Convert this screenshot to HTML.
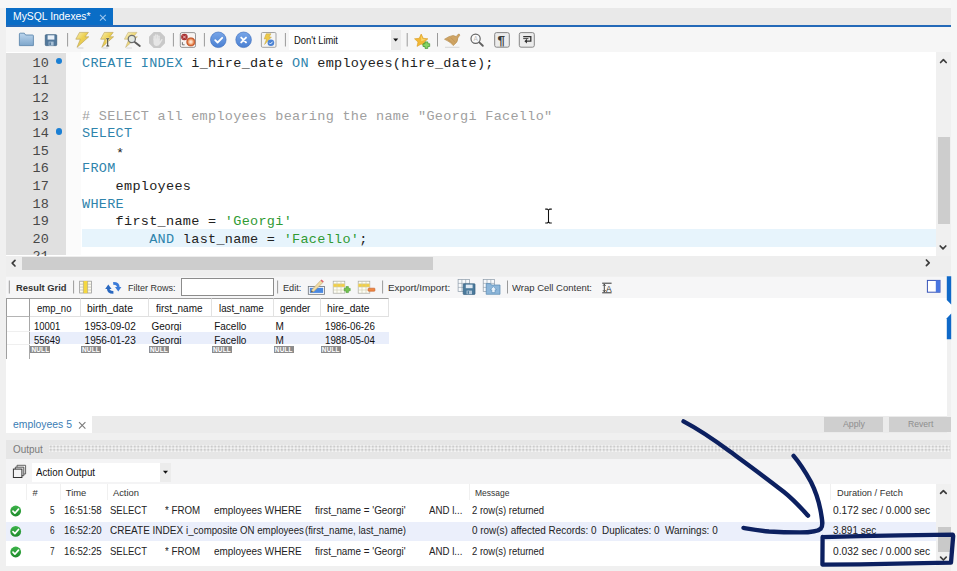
<!DOCTYPE html>
<html>
<head>
<meta charset="utf-8">
<title>MySQL Indexes</title>
<style>
*{box-sizing:border-box;margin:0;padding:0}
html,body{width:957px;height:571px;overflow:hidden;background:#f0f0f0}
body{position:relative;font-family:"Liberation Sans",sans-serif;font-size:11px;color:#111}
.abs{position:absolute}
#topstrip{left:0;top:0;width:957px;height:8px;background:#f7f7f7}
#rightstrip{left:951px;top:0;width:6px;height:571px;background:#f6f6f6}
#tabbar{left:6px;top:8px;width:945px;height:18px;background:#e9e9e9}
#tab{left:6px;top:8px;width:107px;height:19px;background:#0a6dc6}
#tabline{left:6px;top:24.9px;width:945px;height:2.7px;background:#2469b8}
#toolbar{left:6px;top:27.3px;width:945px;height:25px;background:#f6f6f6}
#editor{left:6px;top:52px;width:930px;height:203.7px;background:#fff;overflow:hidden}
#gutter{left:0;top:1px;width:59.5px;height:202px;background:#e0e0e0}
#fold{left:59.5px;top:0;width:15.5px;height:203px;background:#fbfbfb}
.ln{position:absolute;left:0;width:43.2px;text-align:right;font-family:"Liberation Mono",monospace;font-size:13.5px;letter-spacing:0.3px;color:#484848;line-height:17.6px;height:17.6px}
.dot{position:absolute;left:49.5px;width:6.4px;height:6.4px;border-radius:50%;background:#1a7fd4}
.code{position:absolute;left:76px;font-family:"Liberation Mono",monospace;font-size:13.5px;letter-spacing:0.3px;line-height:17.6px;height:17.6px;white-space:pre;color:#222}
.kw{color:#2f84ac}
.cm{color:#a0a0a0}
.st{color:#2f9a33}
#hl{left:76px;top:177.3px;width:854px;height:17.4px;background:#e7f4fc}
#vscroll{left:936px;top:52px;width:15px;height:203.7px;background:#f0f0f0}
#vthumb{left:937.5px;top:137px;width:12.5px;height:86.5px;background:#cdcdcd}
#hscroll{left:6px;top:255.7px;width:945px;height:20.8px;background:#eeeeee}
#hthumb{left:22px;top:257px;width:411px;height:12.5px;background:#cdcdcd}
.t{position:absolute;white-space:pre;line-height:1;transform-origin:0 50%}
#dd1{left:288.5px;top:30px;width:102.5px;height:19.5px;background:#fff}
#dd1b{left:391px;top:30px;width:9.5px;height:19.5px;background:#e9e9e9}
#svgall{left:0;top:0;width:957px;height:571px;pointer-events:none}
#rtool{left:6px;top:276.5px;width:941px;height:21.5px;background:#f6f6f7}
#grid{left:6px;top:297.5px;width:941px;height:118.5px;background:#fff}
#rtab{left:6px;top:416px;width:86px;height:17px;background:#fff}
#rtabbar{left:92px;top:416px;width:855px;height:17px;background:#ebebeb}
#finput{left:181px;top:277.5px;width:93px;height:18.5px;background:#fff;border:1px solid #8c8c8c}
.btn{position:absolute;top:417px;height:15.3px;background:#cfcfcf}
#outhdr{left:6px;top:439.5px;width:945px;height:19px;background:#e6e6e6}
#outdots{left:49px;top:445.4px;width:901px;height:6.4px;background-image:radial-gradient(circle,#cbcbcb 0.75px,transparent 1px),radial-gradient(circle,#f4f4f4 0.75px,transparent 1px);background-size:3.5px 3.2px;background-position:0 0,1.75px 1.6px}
#actrow{left:6px;top:458.5px;width:945px;height:26px;background:#f4f4f5}
#dd2{left:32.2px;top:463px;width:127.8px;height:18.6px;background:#fff}
#dd2b{left:160px;top:463px;width:10.5px;height:18.6px;background:#ececec}
#otable{left:6px;top:484px;width:930px;height:82px;background:#fff}
#orow2{left:6px;top:522px;width:930px;height:18.5px;background:#ebeffb}
#oscroll{left:936px;top:484px;width:15px;height:82px;background:#f0f0f0}
#othumb{left:938px;top:527px;width:12.5px;height:25px;background:#c9c9c9}
.gh{position:absolute;top:298px;height:18.5px;border-top:1px solid #9c9c9c;border-bottom:1px solid #e0e0e0;border-right:1px solid #e2e2e2;background:#fff}
.clip{position:absolute;overflow:hidden}
.null{position:absolute;top:345.6px;height:7.6px;width:20.3px;background:#8c8c8c;color:#fff;font-size:6.4px;font-weight:bold;line-height:7.6px;text-align:center;letter-spacing:0.2px}
</style>
</head>
<body>
<div class="abs" id="topstrip"></div>
<div class="abs" id="tabbar"></div>
<div class="abs" id="tab"></div>
<div class="abs" id="tabline"></div>
<div class="abs" id="toolbar"></div>
<div class="t" style="left:12.60px;top:11.37px;font-size:11.5px;color:#fff;transform:scaleX(0.9037);">MySQL Indexes*</div>
<div class="abs" id="editor">
  <div class="abs" id="gutter"></div>
  <div class="abs" id="fold"></div>
  <div class="abs" id="hl"></div>
  <div class="ln" style="top:2.7px">10</div><div class="dot" style="top:5.9px"></div>
  <div class="ln" style="top:20.3px">11</div>
  <div class="ln" style="top:37.9px">12</div>
  <div class="ln" style="top:55.5px">13</div>
  <div class="ln" style="top:73.1px">14</div><div class="dot" style="top:76.3px"></div>
  <div class="ln" style="top:90.7px">15</div>
  <div class="ln" style="top:108.3px">16</div>
  <div class="ln" style="top:125.9px">17</div>
  <div class="ln" style="top:143.5px">18</div>
  <div class="ln" style="top:161.1px">19</div>
  <div class="ln" style="top:178.7px">20</div>
  <div class="ln" style="top:196.3px">21</div>
  <div class="code" style="top:2.7px"><span class="kw">CREATE INDEX</span> i_hire_date <span class="kw">ON</span> employees(hire_date);</div>
  <div class="code" style="top:55.5px"><span class="cm"># SELECT all employees bearing the name "Georgi Facello"</span></div>
  <div class="code" style="top:73.1px"><span class="kw">SELECT</span></div>
  <div class="code" style="top:90.7px">    <span style="position:relative;top:2.2px;left:0.5px">*</span></div>
  <div class="code" style="top:108.3px"><span class="kw">FROM</span></div>
  <div class="code" style="top:125.9px">    employees</div>
  <div class="code" style="top:143.5px"><span class="kw">WHERE</span></div>
  <div class="code" style="top:161.1px">    first_name = <span class="st">'Georgi'</span></div>
  <div class="code" style="top:178.7px">        <span class="kw">AND</span> last_name = <span class="st">'Facello'</span>;</div>
</div>
<div class="abs" id="vscroll"></div>
<div class="abs" id="vthumb"></div>
<div class="abs" id="hscroll"></div>
<div class="abs" id="hthumb"></div>
<div class="abs" id="dd1"></div><div class="abs" id="dd1b"></div>
<div class="t" style="left:293.70px;top:35.23px;font-size:11.3px;color:#111;transform:scaleX(0.8295);">Don't Limit</div>
<div class="abs" id="rtool"></div>
<div class="abs" id="grid"></div>
<div class="abs" id="finput"></div>
<div class="t" style="left:16.40px;top:283.00px;font-size:9.8px;color:#333;font-weight:bold;transform:scaleX(0.9563);">Result Grid</div>
<div class="t" style="left:128.40px;top:283.00px;font-size:9.8px;color:#333;transform:scaleX(0.9199);">Filter Rows:</div>
<div class="t" style="left:282.60px;top:283.00px;font-size:9.8px;color:#333;transform:scaleX(0.9373);">Edit:</div>
<div class="t" style="left:388.00px;top:283.00px;font-size:9.8px;color:#333;transform:scaleX(1.0104);">Export/Import:</div>
<div class="t" style="left:512.00px;top:283.00px;font-size:9.8px;color:#333;transform:scaleX(0.9682);">Wrap Cell Content:</div>
<div class="gh" style="left:6.2px;width:24.1px;border-left:1px solid #9a9a9a;border-right:1px solid #9c9c9c;border-bottom:1px solid #b4b4b4"></div>
<div class="gh" style="left:30px;width:50.5px"></div>
<div class="gh" style="left:80.5px;width:68px"></div>
<div class="gh" style="left:148.5px;width:63px"></div>
<div class="gh" style="left:211.5px;width:62px"></div>
<div class="gh" style="left:273.5px;width:47px"></div>
<div class="gh" style="left:320.5px;width:68.5px"></div>
<div class="t" style="left:36.50px;top:302.81px;font-size:10.5px;color:#111;transform:scaleX(0.9083);">emp_no</div>
<div class="t" style="left:87.40px;top:302.81px;font-size:10.5px;color:#111;transform:scaleX(0.9821);">birth_date</div>
<div class="t" style="left:155.50px;top:302.81px;font-size:10.5px;color:#111;transform:scaleX(0.9479);">first_name</div>
<div class="t" style="left:218.70px;top:302.81px;font-size:10.5px;color:#111;transform:scaleX(0.9241);">last_name</div>
<div class="t" style="left:279.70px;top:302.81px;font-size:10.5px;color:#111;transform:scaleX(0.9277);">gender</div>
<div class="t" style="left:327.00px;top:302.81px;font-size:10.5px;color:#111;transform:scaleX(0.9699);">hire_date</div>
<div class="abs" style="left:6.2px;top:316.5px;width:1px;height:42.5px;background:#a0a0a0"></div>
<div class="abs" style="left:29.3px;top:316.5px;width:1px;height:42.5px;background:#a8a8a8"></div>
<div class="abs" style="left:7px;top:330.7px;width:23px;height:1px;background:#efefef"></div>
<div class="abs" style="left:7px;top:343.9px;width:23px;height:1px;background:#efefef"></div>
<div class="clip" style="left:30px;top:317px;width:359px;height:13.6px;background:transparent">
<div class="t" style="left:3.90px;top:4.54px;font-size:10px;color:#111;transform:scaleX(0.9446);">10001</div>
<div class="t" style="left:54.60px;top:4.54px;font-size:10px;color:#111;">1953-09-02</div>
<div class="t" style="left:121.50px;top:4.54px;font-size:10px;color:#111;">Georgi</div>
<div class="t" style="left:184.20px;top:4.54px;font-size:10px;color:#111;">Facello</div>
<div class="t" style="left:245.60px;top:4.54px;font-size:10px;color:#111;">M</div>
<div class="t" style="left:295.00px;top:4.54px;font-size:10px;color:#111;transform:scaleX(0.9768);">1986-06-26</div>
</div>
<div class="clip" style="left:30px;top:331.6px;width:359px;height:12.3px;background:#e9eefb">
<div class="t" style="left:3.90px;top:4.54px;font-size:10px;color:#111;transform:scaleX(0.9446);">55649</div>
<div class="t" style="left:54.60px;top:4.54px;font-size:10px;color:#111;">1956-01-23</div>
<div class="t" style="left:121.50px;top:4.54px;font-size:10px;color:#111;">Georgi</div>
<div class="t" style="left:184.20px;top:4.54px;font-size:10px;color:#111;">Facello</div>
<div class="t" style="left:245.60px;top:4.54px;font-size:10px;color:#111;">M</div>
<div class="t" style="left:295.00px;top:4.54px;font-size:10px;color:#111;transform:scaleX(0.9768);">1988-05-04</div>
</div>
<div class="null" style="left:30.2px">NULL</div>
<div class="null" style="left:80.8px">NULL</div>
<div class="null" style="left:148.8px">NULL</div>
<div class="null" style="left:211.8px">NULL</div>
<div class="null" style="left:273.6px">NULL</div>
<div class="null" style="left:320.6px">NULL</div>
<div class="abs" id="rtab"></div>
<div class="abs" id="rtabbar"></div>
<div class="t" style="left:13.00px;top:418.63px;font-size:11.3px;color:#3a7cb4;transform:scaleX(0.9203);">employees 5</div>
<div class="btn" style="left:824.1px;width:59.3px"></div>
<div class="btn" style="left:889.1px;width:61.5px"></div>
<div class="t" style="left:842.60px;top:419.93px;font-size:9.3px;color:#8e8e8e;transform:scaleX(0.9414);">Apply</div>
<div class="t" style="left:907.50px;top:419.93px;font-size:9.3px;color:#8e8e8e;transform:scaleX(0.9267);">Revert</div>
<div class="abs" id="outhdr"></div>
<div class="abs" id="outdots"></div>
<div class="t" style="left:13.00px;top:444.03px;font-size:10.6px;color:#7a7a7a;transform:scaleX(0.9359);">Output</div>
<div class="abs" id="actrow"></div>
<div class="abs" id="dd2"></div><div class="abs" id="dd2b"></div>
<div class="t" style="left:36.00px;top:466.92px;font-size:11.2px;color:#111;transform:scaleX(0.8706);">Action Output</div>
<div class="abs" id="otable"></div>
<div class="abs" id="orow2"></div>
<div class="abs" id="oscroll"></div>
<div class="abs" id="othumb"></div>
<div class="abs" style="left:26px;top:484px;width:1px;height:16px;background:#f0f0f0"></div>
<div class="abs" style="left:59.5px;top:484px;width:1px;height:16px;background:#f0f0f0"></div>
<div class="abs" style="left:106.5px;top:484px;width:1px;height:16px;background:#f0f0f0"></div>
<div class="abs" style="left:468.5px;top:484px;width:1px;height:16px;background:#f0f0f0"></div>
<div class="abs" style="left:830px;top:484px;width:1px;height:16px;background:#f0f0f0"></div>
<div class="t" style="left:32.40px;top:488.34px;font-size:9.4px;color:#333;">#</div>
<div class="t" style="left:65.80px;top:488.34px;font-size:9.4px;color:#333;">Time</div>
<div class="t" style="left:112.90px;top:488.34px;font-size:9.4px;color:#333;">Action</div>
<div class="t" style="left:475.20px;top:488.34px;font-size:9.4px;color:#333;transform:scaleX(0.9037);">Message</div>
<div class="t" style="left:836.80px;top:488.34px;font-size:9.4px;color:#333;transform:scaleX(0.9880);">Duration / Fetch</div>
<div class="t" style="left:50.20px;top:503.88px;font-size:11.6px;color:#222;transform:scaleX(0.7081);">5</div>
<div class="t" style="left:63.70px;top:503.88px;font-size:11.6px;color:#222;transform:scaleX(0.8342);">16:51:58</div>
<div class="t" style="left:110.30px;top:503.88px;font-size:11.6px;color:#222;transform:scaleX(0.8201);">SELECT</div>
<div class="t" style="left:165.30px;top:503.88px;font-size:11.6px;color:#222;transform:scaleX(0.8387);">* FROM</div>
<div class="t" style="left:213.60px;top:503.88px;font-size:11.6px;color:#222;transform:scaleX(0.8563);">employees WHERE</div>
<div class="t" style="left:314.50px;top:503.88px;font-size:11.6px;color:#222;transform:scaleX(0.8508);">first_name = 'Georgi'</div>
<div class="t" style="left:429.30px;top:503.88px;font-size:11.6px;color:#222;transform:scaleX(0.8353);">AND l...</div>
<div class="t" style="left:472.00px;top:503.88px;font-size:11.6px;color:#222;transform:scaleX(0.8171);">2 row(s) returned</div>
<div class="t" style="left:833.30px;top:503.88px;font-size:11.6px;color:#222;transform:scaleX(0.8815);">0.172 sec / 0.000 sec</div>
<div class="t" style="left:50.20px;top:524.08px;font-size:11.6px;color:#222;transform:scaleX(0.7081);">6</div>
<div class="t" style="left:63.70px;top:524.08px;font-size:11.6px;color:#222;transform:scaleX(0.8342);">16:52:20</div>
<div class="t" style="left:109.70px;top:524.08px;font-size:11.6px;color:#222;transform:scaleX(0.8622);">CREATE INDEX</div>
<div class="t" style="left:186.00px;top:524.08px;font-size:11.6px;color:#222;transform:scaleX(0.8313);">i_composite ON employees</div>
<div class="t" style="left:304.80px;top:524.08px;font-size:11.6px;color:#222;transform:scaleX(0.8292);">(first_name, last_name)</div>
<div class="t" style="left:472.00px;top:524.08px;font-size:11.6px;color:#222;transform:scaleX(0.8567);">0 row(s) affected Records: 0  Duplicates: 0  Warnings: 0</div>
<div class="t" style="left:833.30px;top:524.08px;font-size:11.6px;color:#222;transform:scaleX(0.8589);">3.891 sec</div>
<div class="t" style="left:50.20px;top:544.98px;font-size:11.6px;color:#222;transform:scaleX(0.7081);">7</div>
<div class="t" style="left:63.70px;top:544.98px;font-size:11.6px;color:#222;transform:scaleX(0.8342);">16:52:25</div>
<div class="t" style="left:110.30px;top:544.98px;font-size:11.6px;color:#222;transform:scaleX(0.8201);">SELECT</div>
<div class="t" style="left:165.30px;top:544.98px;font-size:11.6px;color:#222;transform:scaleX(0.8387);">* FROM</div>
<div class="t" style="left:213.60px;top:544.98px;font-size:11.6px;color:#222;transform:scaleX(0.8563);">employees WHERE</div>
<div class="t" style="left:314.50px;top:544.98px;font-size:11.6px;color:#222;transform:scaleX(0.8508);">first_name = 'Georgi'</div>
<div class="t" style="left:429.30px;top:544.98px;font-size:11.6px;color:#222;transform:scaleX(0.8353);">AND l...</div>
<div class="t" style="left:472.00px;top:544.98px;font-size:11.6px;color:#222;transform:scaleX(0.8171);">2 row(s) returned</div>
<div class="t" style="left:833.30px;top:544.98px;font-size:11.6px;color:#222;transform:scaleX(0.8815);">0.032 sec / 0.000 sec</div>
<div class="abs" id="rightstrip"></div>
<svg class="abs" id="svgall" viewBox="0 0 957 571">
<defs>
<linearGradient id="gFolder" x1="0" y1="0" x2="0" y2="1"><stop offset="0" stop-color="#bcd6ee"/><stop offset="1" stop-color="#7ea6cb"/></linearGradient>
<linearGradient id="gBolt" x1="0" y1="0" x2="1" y2="1"><stop offset="0" stop-color="#f8efb8"/><stop offset="0.45" stop-color="#ecd050"/><stop offset="1" stop-color="#dcc068"/></linearGradient>
<linearGradient id="gBlue" x1="0" y1="0" x2="0" y2="1"><stop offset="0" stop-color="#78a6e8"/><stop offset="1" stop-color="#4a80d2"/></linearGradient>
<radialGradient id="gOr" cx="0.5" cy="0.5" r="0.5"><stop offset="0" stop-color="#fff6ee"/><stop offset="0.4" stop-color="#f8c8a6"/><stop offset="0.78" stop-color="#e47a44"/><stop offset="1" stop-color="#c04c1c"/></radialGradient>
<linearGradient id="gGreen" x1="0" y1="0" x2="0" y2="1"><stop offset="0" stop-color="#3cb44a"/><stop offset="1" stop-color="#1e8a2c"/></linearGradient>
<g id="bolt"><path d="M4.1 0.6 L13 0.6 L9.6 5 L13.4 5 L1.6 15.6 L4.9 7.4 L0.4 7.4 Z" fill="url(#gBolt)" stroke="#b8a050" stroke-width="0.6" stroke-linejoin="round"/><path d="M2.2 16.2 L8 16.2" stroke="#c9c9c9" stroke-width="0.8"/></g>
<g id="okc"><circle cx="0" cy="0" r="5.4" fill="url(#gGreen)"/><path d="M-2.7 0.2 L-0.8 2.2 L2.8 -1.9" fill="none" stroke="#fff" stroke-width="1.7" stroke-linecap="round" stroke-linejoin="round"/></g>
</defs>

<!-- ===== top toolbar ===== -->
<!-- folder -->
<path d="M19.4 45.6 V34 Q19.4 33.2 20.2 33.2 H24.3 L25.6 35 H32.6 Q33.4 35 33.4 35.8 V45.6 Z" fill="url(#gFolder)" stroke="#5f88ae" stroke-width="0.9"/>
<!-- floppy -->
<rect x="45.3" y="34.7" width="11.4" height="10.9" rx="0.8" fill="#52789b" stroke="#3f6383" stroke-width="0.8"/>
<rect x="47.6" y="35.3" width="6.8" height="4.3" fill="#e9f1f9"/>
<rect x="48.6" y="41.6" width="5" height="4" fill="#a9c1d6"/>
<rect x="49.4" y="42.4" width="1.5" height="2.6" fill="#52789b"/>
<!-- separators -->
<g stroke="#9a9a9a" stroke-width="1">
<path d="M67.6 33 V46.5 M173.4 33 V46.5 M204.4 33 V46.5 M285.4 33 V46.5 M407.2 33 V46.5 M437.5 33 V46.5"/>
</g>
<!-- bolts -->
<use href="#bolt" x="75.4" y="31.8"/>
<use href="#bolt" x="100.2" y="31.8"/>
<path d="M106.2 38.8 H109.2 M107.7 38.8 V46 M106.2 46 H109.2" stroke="#fff" stroke-width="2.2" fill="none" opacity="0.7"/><path d="M106.2 38.8 H109.2 M107.7 38.8 V46 M106.2 46 H109.2" stroke="#44443a" stroke-width="1.1" fill="none"/>
<g opacity="0.75"><use href="#bolt" x="124" y="31.8"/></g>
<circle cx="131.8" cy="39" r="3.6" fill="#dfeaf3" fill-opacity="0.85" stroke="#6d6d6d" stroke-width="1.2"/>
<path d="M135 42.2 L139.8 46" stroke="#5a5a5a" stroke-width="1.9" stroke-linecap="round"/>
<!-- stop -->
<path d="M154 32.9 H160 L164.2 37.1 V42.9 L160 47.1 H154 L149.8 42.9 V37.1 Z" fill="#c9c9c9" stroke="#c9c9c9" stroke-width="1.6" stroke-linejoin="round"/>
<g fill="#e6e6e6">
<rect x="153.5" y="35.4" width="1.4" height="5" rx="0.7"/>
<rect x="155.1" y="34.3" width="1.4" height="6" rx="0.7"/>
<rect x="156.7" y="34.5" width="1.4" height="6" rx="0.7"/>
<rect x="158.3" y="35.6" width="1.4" height="5" rx="0.7"/>
<path d="M153.5 38.6 H159.7 V41.4 L161.6 39 Q162.6 38.6 162.6 39.8 L160 44 Q158.8 46 156.6 46 Q153.5 46 153.5 42.6 Z"/>
</g>
<!-- red icon -->
<rect x="180.3" y="32.6" width="15.2" height="14.8" rx="1.6" fill="#f8f4f2" stroke="#8c8c8c" stroke-width="0.9"/>
<circle cx="184.4" cy="37" r="3.3" fill="#a83232"/>
<path d="M183 35.6 L185.8 38.4 M185.8 35.6 L183 38.4" stroke="#f0c8c8" stroke-width="0.9"/>
<path d="M182.4 42.2 V44.8 H184.6" stroke="#555" stroke-width="0.8" fill="none"/>
<circle cx="190.8" cy="41.9" r="4.1" fill="url(#gOr)" stroke="#b84a1e" stroke-width="0.6"/>
<!-- blue check / x -->
<circle cx="218.3" cy="39.8" r="7.8" fill="url(#gBlue)" stroke="#3a6cba" stroke-width="0.6"/>
<path d="M215.2 40.1 L217.6 42.5 L222.2 37.8" fill="none" stroke="#fff" stroke-width="1.8" stroke-linecap="round" stroke-linejoin="round"/>
<circle cx="243.6" cy="39.8" r="7.8" fill="url(#gBlue)" stroke="#3a6cba" stroke-width="0.6"/>
<path d="M241.2 37.6 L246 42.4 M246 37.6 L241.2 42.4" fill="none" stroke="#fff" stroke-width="1.9" stroke-linecap="round"/>
<!-- bolt+check box -->
<rect x="261.4" y="32.5" width="14.6" height="14.8" rx="1.2" fill="#f4f4f4" stroke="#9a9a9a" stroke-width="0.9"/>
<path d="M266.2 33.8 L271 33.8 L269 37 L271.4 37 L264.6 44.4 L266.6 39 L264.2 39 Z" fill="#ecc94a" stroke="#c4a43c" stroke-width="0.5"/>
<circle cx="270.9" cy="42.8" r="3.3" fill="#4a82d4"/>
<path d="M269.3 42.8 L270.5 44 L272.6 41.7" fill="none" stroke="#fff" stroke-width="0.9"/>
<!-- dropdown arrow -->
<path d="M393.2 38.6 H398.2 L395.7 41.4 Z" fill="#111"/>
<!-- star + plus -->
<path d="M421.2 34 L423.2 38.3 L427.9 38.8 L424.4 42 L425.4 46.4 L421.2 44.1 L417 46.4 L418 42 L414.5 38.8 L419.2 38.3 Z" fill="#f2b834" stroke="#d89c24" stroke-width="0.6" stroke-linejoin="round"/>
<path d="M421.2 35.8 L422.6 39 L426 39.4 L421.2 41.2 Z" fill="#fad870"/>
<path d="M425 41.9 H427.8 V43.7 H429.7 V46.5 H427.8 V48.4 H425 V46.5 H423 V43.7 H425 Z" fill="#86d464" stroke="#3c9232" stroke-width="0.7" stroke-linejoin="round"/>
<!-- broom -->
<path d="M444.5 39.2 Q449 36 453.2 35.4 L456.2 36.6 L458.2 34.2 Q459.6 33.6 459.8 35.2 L457.8 38 Q458.4 42 453.2 45.6 Q451.4 42.4 444.5 39.2 Z" fill="#cfa464" stroke="#b08848" stroke-width="0.6" stroke-linejoin="round"/>
<path d="M447.5 39.4 Q451 41 452.8 43.6 M450.5 37.6 Q453.6 39.6 455 42.4" stroke="#b88c4c" stroke-width="0.5" fill="none"/>
<path d="M445 47.3 H459.4" stroke="#cdcdcd" stroke-width="0.8"/>
<!-- magnifier -->
<circle cx="475.6" cy="38.8" r="4.6" fill="#fbfbfb" stroke="#666" stroke-width="1.2"/>
<text x="473.4" y="41.2" font-family="Liberation Sans, sans-serif" font-size="6.5" fill="#bdbdbd">A</text>
<path d="M479.3 42.4 L482.8 45.8" stroke="#606060" stroke-width="1.9" stroke-linecap="round"/>
<!-- pilcrow box / wrap box -->
<rect x="494.7" y="32.6" width="14.6" height="14.6" rx="1.8" fill="#ececec" stroke="#7a7a7a" stroke-width="0.9"/>
<rect x="519.3" y="32.6" width="15" height="14.6" rx="1.8" fill="#ececec" stroke="#7a7a7a" stroke-width="0.9"/>
<path d="M523.2 36.6 H530.8 V41.2 H525.6" fill="none" stroke="#333" stroke-width="1.3"/>
<path d="M527 38.8 L524.4 41.2 L527 43.6 Z" fill="#333"/>
<path d="M523.2 38.6 H528.4" stroke="#333" stroke-width="0.9"/>
<text x="497.6" y="44.6" font-family="Liberation Sans, sans-serif" font-size="13.5" font-weight="bold" fill="#3a3a3a">¶</text>

<!-- editor scroll chevrons -->
<g fill="none" stroke="#3c3c3c" stroke-width="1.7" stroke-linecap="round" stroke-linejoin="round">
<path d="M940.6 62.5 L943.4 59.7 L946.2 62.5"/>
<path d="M940.2 246 L943 248.8 L945.8 246"/>
<path d="M15 260.4 L12.2 263.2 L15 266"/>
<path d="M926.4 260 L929.2 262.8 L926.4 265.6"/>
<path d="M940.6 493.4 L943.4 490.6 L946.2 493.4"/>
<path d="M940.6 557.2 L943.4 560 L946.2 557.2"/>
</g>
<!-- I-beam cursor -->
<path d="M545.2 209.1 H547.4 L548.5 210.1 L549.6 209.1 H551.8 M548.5 210.1 V222 M545.2 223 H547.4 L548.5 222 L549.6 223 H551.8" fill="none" stroke="#111" stroke-width="1.05" stroke-linejoin="round"/>

<!-- ===== result toolbar ===== -->
<g stroke="#9a9a9a" stroke-width="1">
<path d="M9.3 280.5 V293.5 M73.6 280.5 V293.5 M277.6 280.5 V293.5 M382.6 280.5 V293.5 M507.5 280.5 V293.5"/>
</g>
<!-- grid icon -->
<rect x="79.6" y="281.2" width="11.8" height="11.8" fill="#fdfbee" stroke="#9c9c9c" stroke-width="0.8"/>
<rect x="83.4" y="281" width="4.2" height="12.2" fill="#f5d840"/>
<path d="M83.4 281.2 V293 M87.6 281.2 V293" stroke="#a8a078" stroke-width="0.6" fill="none"/>
<path d="M79.6 284.2 H83.4 M87.6 284.2 H91.4 M79.6 287.1 H83.4 M87.6 287.1 H91.4 M79.6 290 H83.4 M87.6 290 H91.4" stroke="#b4b4b4" stroke-width="0.7" fill="none"/>
<!-- refresh -->
<path d="M113.2 283.4 Q118.2 283.2 118.4 287.6" fill="none" stroke="#3a7ad8" stroke-width="2.6"/>
<path d="M115 287 H121.4 L118.3 291.4 Z" fill="#3a7ad8"/>
<path d="M113.4 292.4 Q108.4 292.6 108.2 288.4" fill="none" stroke="#2a68c0" stroke-width="2.6"/>
<path d="M105.2 289 H111.6 L108.3 284.4 Z" fill="#2a68c0"/>
<!-- edit pencil -->
<rect x="308.3" y="286.4" width="16.3" height="7.9" fill="#fff" stroke="#6a7078" stroke-width="0.8"/>
<rect x="309.8" y="287.8" width="13.4" height="5.1" fill="#4a88e0"/>
<path d="M311.2 292.2 L312 289.6 L320.6 280.6 L322.8 282.6 L314 291.4 Z" fill="#f2dca4" stroke="#b49860" stroke-width="0.5"/>
<path d="M320.6 280.6 L321.6 279.6 L323.8 281.6 L322.8 282.6 Z" fill="#e0606c"/>
<path d="M311.2 292.2 L311.7 290.6 L312.8 291.7 Z" fill="#333"/>
<!-- add row -->
<g>
<rect x="333.2" y="281.2" width="11.6" height="12" fill="#fdfdf4" stroke="#a8a8a0" stroke-width="0.7"/>
<rect x="333.4" y="283.8" width="11.2" height="3.2" fill="#f5d040"/>
<path d="M333.2 283.8 H344.8 M333.2 287 H344.8 M333.2 290 H344.8 M337 281.2 V293.2 M341 281.2 V293.2" stroke="#cdc9ac" stroke-width="0.6" fill="none"/>
<path d="M346 286.6 H348.4 V288.4 H350.2 V290.8 H348.4 V292.6 H346 V290.8 H344.2 V288.4 H346 Z" fill="#74c450" stroke="#4a9a30" stroke-width="0.6"/>
</g>
<!-- delete row -->
<g>
<rect x="358.2" y="281.2" width="11.6" height="12" fill="#fdfdf4" stroke="#a8a8a0" stroke-width="0.7"/>
<rect x="358.4" y="283.8" width="11.2" height="3.2" fill="#f5d040"/>
<path d="M358.2 283.8 H369.8 M358.2 287 H369.8 M358.2 290 H369.8 M362 281.2 V293.2 M366 281.2 V293.2" stroke="#cdc9ac" stroke-width="0.6" fill="none"/>
<rect x="368.1" y="288.2" width="6.8" height="3" rx="0.6" fill="#f08844" stroke="#c45a24" stroke-width="0.6"/>
</g>
<!-- export -->
<g>
<rect x="458.1" y="279.6" width="11.4" height="11.8" fill="#f8fafc" stroke="#8c9aa8" stroke-width="0.7"/>
<path d="M458.1 283.4 H469.5 M458.1 287.4 H469.5 M461.9 279.6 V291.4 M465.7 279.6 V291.4" stroke="#8c9aa8" stroke-width="0.6" fill="none"/>
<rect x="463.2" y="283.8" width="11.8" height="10.6" rx="0.6" fill="#4a7a9c" stroke="#386080" stroke-width="0.7"/>
<rect x="465.8" y="284.6" width="6.8" height="3.6" fill="#dfeaf4"/>
<rect x="466.6" y="290.6" width="5.4" height="3.6" fill="#b6cadc"/>
<rect x="467.6" y="291.2" width="1.4" height="2.6" fill="#4a7a9c"/>
</g>
<!-- import -->
<g>
<rect x="483.2" y="279.6" width="11.4" height="11.8" fill="#f8fafc" stroke="#8c9aa8" stroke-width="0.7"/>
<path d="M483.2 283.4 H494.6 M483.2 287.4 H494.6 M487 279.6 V291.4 M490.8 279.6 V291.4" stroke="#8c9aa8" stroke-width="0.6" fill="none"/>
<path d="M486.2 294.3 V283.6 H490.4 L491.4 285 H500 V294.3 Z" fill="#8cb6da" stroke="#5888b0" stroke-width="0.7"/>
<path d="M493.4 286.6 L496.6 289.8 H495 V292.6 H491.8 V289.8 H490.2 Z" fill="#e8f2fb" stroke="#4f80ac" stroke-width="0.5"/>
</g>
<!-- wrap cell icon -->
<path d="M602.2 283.2 H611.6 M602.2 292.8 H611.6" stroke="#333" stroke-width="1"/>
<path d="M604.3 284.4 V291.6 M603 285.8 L604.3 284.2 L605.6 285.8 M603 290.2 L604.3 291.8 L605.6 290.2" stroke="#333" stroke-width="0.9" fill="none"/>
<text x="606" y="291.6" font-family="Liberation Sans, sans-serif" font-size="8.5" fill="#333">A</text>
<!-- panel icon -->
<rect x="927.4" y="280.4" width="12.6" height="11.8" fill="#fff" stroke="#3653b8" stroke-width="1"/>
<rect x="935.8" y="280.4" width="4.2" height="11.8" fill="#4a76e0"/>
<!-- blue side bar -->
<path d="M946.8 299 H951.2 V319 H946.8 Z" fill="#fff"/>
<path d="M946.8 276.3 H951.2 V304.4 L946.8 300 Z" fill="#0f69c8"/>
<path d="M946.8 318.3 L951.2 313.5 V339.3 H946.8 Z" fill="#0f69c8"/>

<!-- result tab close x -->
<path d="M79 422.2 L85.4 428.6 M85.4 422.2 L79 428.6" stroke="#7a7a7a" stroke-width="1.1"/>
<!-- main tab close x -->
<path d="M100 14.9 L105.8 20.7 M105.8 14.9 L100 20.7" stroke="#9cc6ee" stroke-width="1.1"/>

<!-- ===== output ===== -->
<path d="M17 467.2 V465.3 H25.6 V474 H23.8" fill="none" stroke="#555" stroke-width="0.9"/>
<path d="M15.3 469.1 V467.2 H23.8 V475.7 H21.9" fill="none" stroke="#444" stroke-width="0.9"/>
<rect x="13.4" y="469.1" width="8.5" height="8.4" fill="none" stroke="#333" stroke-width="1"/>
<path d="M163 470.8 H168 L165.5 473.8 Z" fill="#111"/>
<use href="#okc" x="15.7" y="511"/>
<use href="#okc" x="15.7" y="531.4"/>
<use href="#okc" x="15.7" y="552"/>

<!-- ===== annotation ===== -->
<g fill="none" stroke="#0c2060" stroke-linecap="round" stroke-linejoin="round">
<path stroke-width="4.4" d="M683.5 421.4 C700 430 715 440.5 730 451.5 C745 462.5 765 477 784 492 C794 500 802 509 808 515.6"/>
<path stroke-width="4.4" d="M793.6 455.9 C798 461 806 473 811 482 C816 492 819.5 504 821 513 C822.2 520 823.4 526 820.8 528.6 C818.4 531 812 532.4 800 532.4 C790 532.4 780 532.2 769 531.5 C758 530.5 750 529 743.5 527.9"/>
<path stroke-width="4.3" d="M822.6 537 L822.4 564.6 L860 564.4 L910 563.4 L951 562.6 L953.2 536 L952.8 534.6 L900 535.4 L860 536.2 L822.6 537.2"/>
</g>
</svg>
</body>
</html>
